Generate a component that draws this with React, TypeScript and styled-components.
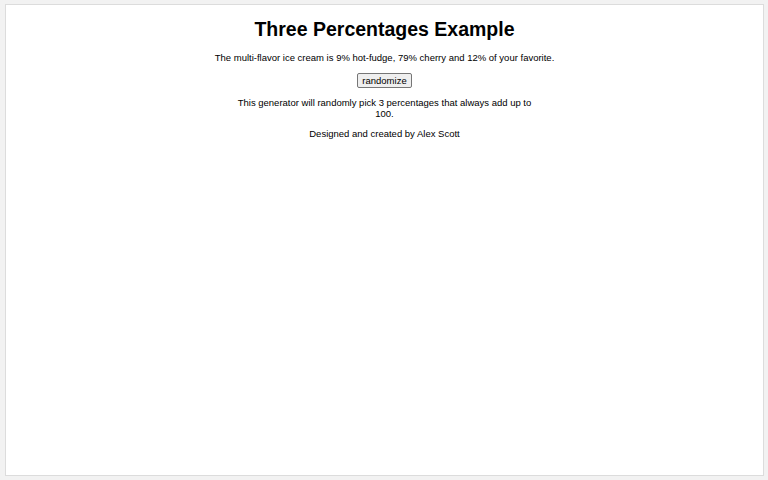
import { useState } from "react";
import styled, { createGlobalStyle } from "styled-components";

const GlobalStyle = createGlobalStyle`
  html, body {
    margin: 0;
    padding: 0;
    background: #f2f2f2;
  }
  body {
    font-family: "Liberation Sans", Arial, sans-serif;
    color: #000;
  }
`;

const Page = styled.div`
  padding: 4px 4px 4px 5px;
  height: 480px;
  box-sizing: border-box;
`;

const Panel = styled.div`
  background: #ffffff;
  border: 1px solid #dcdcdc;
  height: 100%;
  box-sizing: border-box;
  display: flex;
  flex-direction: column;
  align-items: center;
  text-align: center;
  padding-top: 13px;
`;

const Title = styled.h1`
  font-size: 19.5px;
  font-weight: bold;
  margin: 0 0 11px;
`;

const Text = styled.p`
  font-size: 9.5px;
  margin: 0 0 9px;
  line-height: 11px;
`;

const Narrow = styled(Text)`
  max-width: 300px;
`;

const Button = styled.button`
  font-family: "Liberation Sans", Arial, sans-serif;
  font-size: 9.5px;
  height: 15px;
  padding: 0 4px;
  margin: 1px 0 9px;
  background: #efefef;
  border: 1px solid #767676;
  border-radius: 2px;
  color: #000;
`;

const pick = () => {
  const a = Math.floor(Math.random() * 99) + 1;
  const b = Math.floor(Math.random() * (100 - a));
  return [a, b, 100 - a - b];
};

const App = () => {
  const [pcts, setPcts] = useState([9, 79, 12]);

  return (
    <>
      <GlobalStyle />
      <Page>
        <Panel>
          <Title>Three Percentages Example</Title>
          <Text>
            The multi-flavor ice cream is {pcts[0]}% hot-fudge, {pcts[1]}% cherry and {pcts[2]}% of your favorite.
          </Text>
          <Button onClick={() => setPcts(pick())}>randomize</Button>
          <Narrow>This generator will randomly pick 3 percentages that always add up to 100.</Narrow>
          <Text>Designed and created by Alex Scott</Text>
        </Panel>
      </Page>
    </>
  );
};

export default App;
